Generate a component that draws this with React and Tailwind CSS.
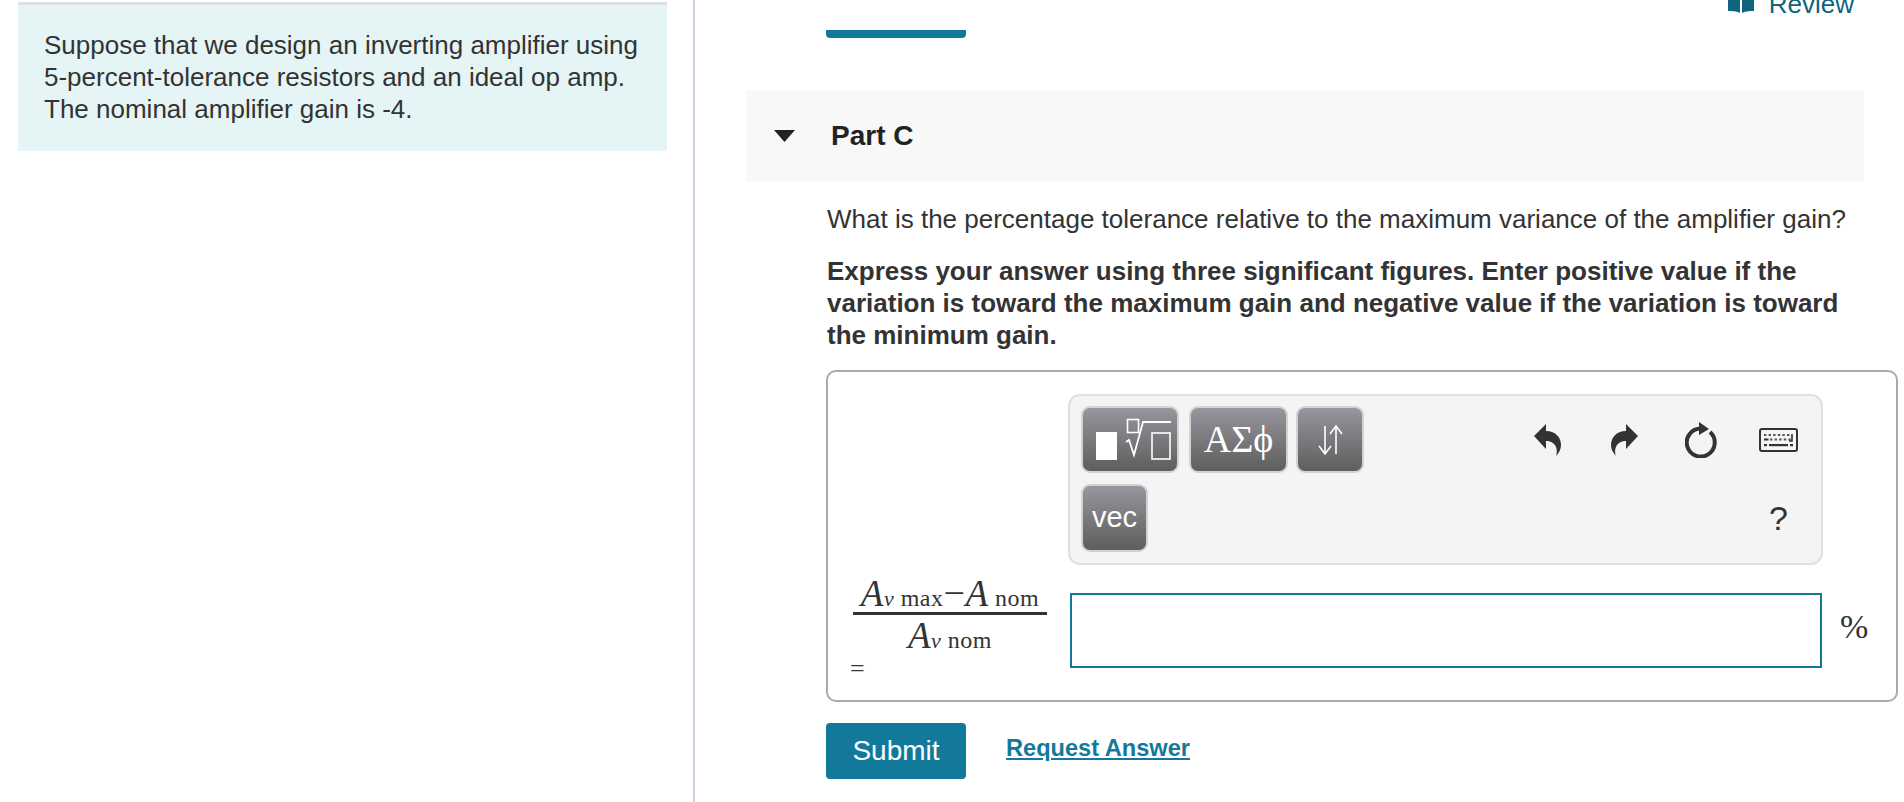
const mathButton = 'flex shrink-0 items-center justify-center rounded-[9px] border-2 border-[#d2d2d2] bg-gradient-to-b from-[#98969e] to-[#5e5e5e] text-white';
const serif = '[font-family:"Liberation_Serif",serif]';

function UndoIcon({ className = '' }) {
  return (
    <svg width="27" height="32" viewBox="0 0 27 32" className={className} aria-hidden="true">
      <path d="M0 12 L12 0 V7 C22 7 27 14 27 21 C27 25 25 29 22 32 C24 27 23 17 12 17 V25 Z" fill="#333" />
    </svg>
  );
}

function RefreshIcon() {
  return (
    <svg width="34" height="36" viewBox="0 0 34 36" aria-hidden="true">
      <path d="M25 10 A14 14 0 1 1 16 6.5" fill="none" stroke="#333" strokeWidth="4" />
      <path d="M14 0 L24 7 L14 13 Z" fill="#333" />
    </svg>
  );
}

function KeyboardIcon() {
  const dots = [];
  for (let i = 0; i < 6; i++) dots.push(<rect key={'a' + i} x={5 + i * 4.6} y="6" width="2.4" height="2" fill="#555" />);
  for (let i = 0; i < 5; i++) dots.push(<rect key={'b' + i} x={11 + i * 4.6} y="10.5" width="2.4" height="2" fill="#555" />);
  return (
    <svg width="39" height="24" viewBox="0 0 39 24" aria-hidden="true">
      <rect x="1" y="1" width="37" height="22" rx="2" fill="#f4f4f4" stroke="#333" strokeWidth="2" />
      {dots}
      <rect x="5" y="10.5" width="4.5" height="2" fill="#333" />
      <path d="M33 6 V13 H30" fill="none" stroke="#333" strokeWidth="1.6" />
      <rect x="5" y="16" width="3" height="2.2" fill="#333" />
      <rect x="10" y="16" width="19" height="2.2" fill="#333" />
      <rect x="31" y="16" width="3" height="2.2" fill="#333" />
    </svg>
  );
}

function TemplatesIcon() {
  return (
    <svg width="94" height="63" viewBox="0 0 94 63" aria-hidden="true">
      <rect x="13" y="24" width="21" height="28" fill="#fff" />
      <rect x="44.5" y="11.5" width="11" height="13" fill="none" stroke="#fff" strokeWidth="1.6" />
      <path d="M43 34 L46 32 L51 47 L60 14 H88" fill="none" stroke="#fff" strokeWidth="1.8" />
      <rect x="69" y="25" width="18" height="26" fill="none" stroke="#fff" strokeWidth="1.6" />
    </svg>
  );
}

function ArrowsIcon() {
  return (
    <svg width="28" height="32" viewBox="0 0 28 32" aria-hidden="true">
      <path d="M9 2 V29 M3 22 L9 30 L15 22" fill="none" stroke="#fff" strokeWidth="1.6" />
      <path d="M20 30 V3 M14 10 L20 2 L26 10" fill="none" stroke="#fff" strokeWidth="1.6" />
    </svg>
  );
}

function BookIcon() {
  return (
    <svg width="26" height="20" viewBox="0 0 26 20" className="mb-[4px]" aria-hidden="true">
      <path d="M0 0 H12 V18 C8 16 4 16 0 16 Z M14 0 H26 V16 C22 16 18 16 14 18 Z" fill="#0f6480" />
    </svg>
  );
}

function Fraction() {
  return (
    <div className={`-mt-[11px] flex w-[212px] shrink-0 flex-col pl-[25px] text-[#333] ${serif}`}>
      <div className="w-[194px] border-b-[3px] border-[#333] text-center leading-[22px] tracking-[0.5px] whitespace-nowrap">
        <span className="text-[37px] italic">A</span>
        <span className="text-[22px] italic">v</span>
        <span className="text-[24px]"> max</span>
        <span className="text-[38px]">−</span>
        <span className="text-[37px] italic">A</span>
        <span className="text-[24px]"> nom</span>
      </div>
      <div className="w-[194px] text-center leading-[41px] tracking-[0.5px] whitespace-nowrap">
        <span className="text-[37px] italic">A</span>
        <span className="text-[22px] italic">v</span>
        <span className="text-[24px]"> nom</span>
      </div>
      <div className="-mt-[7px] -ml-[3px] text-[26px] leading-[26px]">=</div>
    </div>
  );
}

export default function App() {
  return (
    <div className='flex h-[802px] w-[1904px] overflow-hidden bg-white text-[#333] [font-family:"Liberation_Sans",Arial,sans-serif]'>
      <aside className="h-full w-[695px] shrink-0 border-r-2 border-[#c5d3e0] pt-[2px] pl-[18px]">
        <div className="w-[649px] border-t-[3px] border-[#dedfe0] bg-[#e5f5f6] px-[26px] pt-[24px] pb-[26px] text-[26px] leading-[32px]">
          Suppose that we design an inverting amplifier using
          <br />
          5-percent-tolerance resistors and an ideal op amp.
          <br />
          The nominal amplifier gain is -4.
        </div>
      </aside>

      <main className="min-w-0 flex-1">
        <div className="-mt-[16px] flex h-[46px] items-end justify-end gap-[15px] pr-[50px] pb-[11px] text-[26px] leading-[30px] text-[#0f6480]">
          <BookIcon />
          <span>Review</span>
        </div>

        <div className="ml-[131px] h-[8px] w-[140px] rounded-b-[4px] bg-[#12799a]" />

        <div className="mt-[52px] ml-[51px] flex h-[92px] w-[1118px] items-center bg-[#f8f8f8]">
          <svg width="21" height="12" viewBox="0 0 21 12" className="ml-[28px]" aria-hidden="true">
            <path d="M0 0 H21 L10.5 12 Z" fill="#222" />
          </svg>
          <h2 className="ml-[36px] text-[28px] font-bold text-[#222]">Part C</h2>
        </div>

        <div className="ml-[131px]">
          <p className="mt-[21px] ml-[1px] text-[26px] leading-[32px] whitespace-nowrap">
            What is the percentage tolerance relative to the maximum variance of the amplifier gain?
          </p>
          <p className="mt-[20px] ml-[1px] w-[1030px] text-[26px] leading-[32px] font-bold">
            Express your answer using three significant figures. Enter positive value if the variation is toward the maximum gain and negative value if the variation is toward the minimum gain.
          </p>

          <div className="mt-[19px] h-[332px] w-[1072px] rounded-[10px] border-2 border-[#aaa] pt-[22px]">
            <div className="ml-[240px] flex h-[171px] w-[755px] flex-col gap-[11px] rounded-[12px] border-2 border-[#e0e0e0] bg-[#f4f4f4] pt-[10px] pl-[11px]">
              <div className="flex items-center">
                <div className={`${mathButton} h-[67px] w-[98px]`}>
                  <TemplatesIcon />
                </div>
                <div className={`${mathButton} ${serif} ml-[10px] h-[67px] w-[99px] text-[38px]`}>ΑΣϕ</div>
                <div className={`${mathButton} ml-[8px] h-[67px] w-[68px]`}>
                  <ArrowsIcon />
                </div>
                <div className="ml-[170px] flex items-center">
                  <UndoIcon />
                  <UndoIcon className="ml-[50px] -scale-x-100" />
                  <div className="ml-[47px]"><RefreshIcon /></div>
                  <div className="ml-[40px]"><KeyboardIcon /></div>
                </div>
              </div>
              <div className="flex items-center">
                <div className={`${mathButton} h-[68px] w-[67px] text-[29px]`}>vec</div>
                <span className="ml-[621px] text-[34px] leading-none">?</span>
              </div>
            </div>

            <div className="mt-[28px] flex items-start">
              <Fraction />
              <div className="ml-[30px] h-[75px] w-[752px] shrink-0 border-2 border-[#12799a] bg-white" />
              <span className={`ml-[18px] mt-[12px] text-[34px] leading-[44px] ${serif}`}>%</span>
            </div>
          </div>

          <div className="mt-[21px] flex items-center">
            <button type="button" className="h-[56px] w-[140px] rounded-[4px] bg-[#12799a] text-[28px] text-white">Submit</button>
            <a href="#" className="mb-[4px] ml-[40px] text-[23.6px] font-bold text-[#12799a] underline">Request Answer</a>
          </div>
        </div>
      </main>
    </div>
  );
}
